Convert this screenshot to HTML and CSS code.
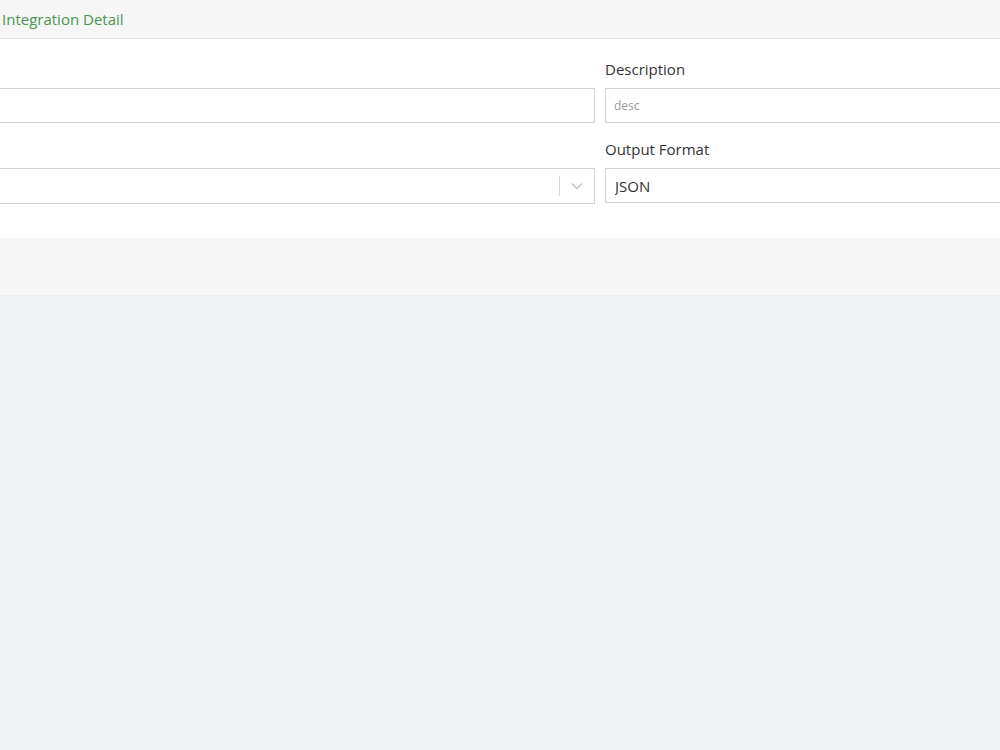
FILE: index.html
```html
<!DOCTYPE html>
<html>
<head>
<meta charset="utf-8">
<link rel="stylesheet" href="styles.css">
</head>
<body>
<div class="panel">
  <div class="panel-heading">Integration Detail</div>
  <div class="panel-body">
    <div class="form-grid">
      <div class="field">
        <div class="field-label"></div>
        <input class="field-input" type="text" value="">
      </div>
      <div class="field">
        <label class="field-label">Description</label>
        <input class="field-input small" type="text" placeholder="desc">
      </div>
      <div class="field">
        <div class="field-label"></div>
        <div class="select">
          <span class="select-value"></span>
          <span class="select-sep"></span>
          <span class="select-arrow">
            <svg width="12" height="8" viewBox="0 0 12 8"><path d="M1 1.5 L6 6.5 L11 1.5" fill="none" stroke="#c4c4c4" stroke-width="1.3"/></svg>
          </span>
        </div>
      </div>
      <div class="field">
        <label class="field-label">Output Format</label>
        <input class="field-input" type="text" value="JSON">
      </div>
    </div>
  </div>
  <div class="panel-footer"></div>
</div>
</body>
</html>
```
FILE: styles.css
```css
html, body {
  margin: 0;
  padding: 0;
  background: #f0f1f5;
  overflow: hidden;
  font-family: "Open Sans", "Noto Sans", sans-serif;
  color: #333;
}
.panel {
  width: 1240px;
  margin-left: -12px;
  background: #fff;
}
.panel-heading {
  height: 38px;
  line-height: 38px;
  padding: 0 14px;
  background: #f6f6f6;
  border-bottom: 1px solid #e2e2e2;
  color: #4a9450;
  font-size: 15px;
}
.panel-body {
  padding: 20px 0 34px 2px;
}
.form-grid {
  display: grid;
  grid-template-columns: 605px 605px;
  column-gap: 10px;
  row-gap: 16px;
}
.field-label {
  display: block;
  font-size: 15px;
  line-height: 20px;
  height: 29px;
  color: #333;
}
.field-input {
  display: block;
  box-sizing: border-box;
  width: 100%;
  height: 35px;
  margin: 0;
  padding: 0 9px;
  border: 1px solid #d2d2d2;
  background: #fff;
  font-family: "Open Sans", "Noto Sans", sans-serif;
  font-size: 15px;
  color: #333;
  outline: none;
}
.field-input.small {
  font-size: 12px;
  padding-left: 8px;
}
.field-input::placeholder {
  color: #9a9a9a;
}
.select {
  box-sizing: border-box;
  height: 36px;
  border: 1px solid #d2d2d2;
  display: flex;
  align-items: center;
}
.select-value {
  flex: 1;
}
.select-sep {
  width: 1px;
  height: 20px;
  background: #d6d6d6;
}
.select-arrow {
  width: 34px;
  display: flex;
  justify-content: center;
  align-items: center;
}
.panel-footer {
  height: 57px;
  background: #f6f6f6;
  border-bottom: 1px solid #eeeeee;
}
```
